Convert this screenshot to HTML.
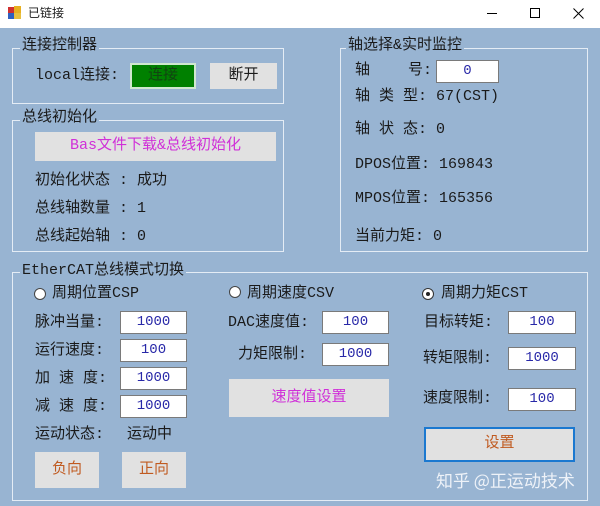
<!DOCTYPE html>
<html><head><meta charset="utf-8"><style>
*{margin:0;padding:0;box-sizing:border-box}
body{width:600px;height:506px;overflow:hidden;background:#98b4d2;position:relative;font-family:"Liberation Mono","Noto Sans CJK SC",monospace;font-size:15px;color:#1a1a1a}
.a{position:absolute;white-space:nowrap;line-height:16px;font-size:15px}
.tb{position:absolute;left:0;top:0;width:600px;height:28px;background:#fff}
.g{position:absolute;border:1px solid #e4ecf5}
.gt{position:absolute;background:#98b4d2;padding:0 2px;line-height:16px;font-size:15px}
.in{position:absolute;background:#fff;border:1px solid #7a7a7a;color:#2828a8;text-align:center;line-height:21px;font-size:14px}
.bt{position:absolute;background:#e1e1e1;text-align:center;font-size:15px}
.r{position:absolute;width:12px;height:12px;border-radius:50%;background:#fff;border:1px solid #444}
</style></head><body>
<div class="tb">
<div style="position:absolute;left:8px;top:7px;width:6px;height:6px;background:#d03030"></div>
<div style="position:absolute;left:14px;top:6px;width:7px;height:7px;background:#e8b020"></div>
<div style="position:absolute;left:8px;top:13px;width:6px;height:6px;background:#3060c0"></div>
<div style="position:absolute;left:14px;top:13px;width:7px;height:6px;background:#e8c040"></div>
<div class="a" style="left:28px;top:5px;font-family:'Noto Sans CJK SC',sans-serif;font-size:12px">已链接</div>
<div style="position:absolute;left:487px;top:13px;width:10px;height:1px;background:#000"></div>
<div style="position:absolute;left:530px;top:8px;width:10px;height:10px;border:1px solid #000"></div>
<svg style="position:absolute;left:573px;top:8px" width="11" height="11"><path d="M0.5 0.5L10.5 10.5M10.5 0.5L0.5 10.5" stroke="#000" stroke-width="1"/></svg>
</div>

<div class="g" style="left:12px;top:48px;width:272px;height:56px"></div>
<div class="gt" style="left:20px;top:38px">连接控制器</div>
<div class="a" style="left:35px;top:68px">local连接:</div>
<div class="bt" style="left:130px;top:63px;width:66px;height:26px;background:#008000;border:2px solid #cfe8cf;line-height:21px;color:#114411">连接</div>
<div class="bt" style="left:210px;top:63px;width:67px;height:26px;line-height:25px">断开</div>

<div class="g" style="left:12px;top:120px;width:272px;height:132px"></div>
<div class="gt" style="left:20px;top:110px">总线初始化</div>
<div class="bt" style="left:35px;top:132px;width:241px;height:29px;line-height:28px;color:#d030d8">Bas文件下载&amp;总线初始化</div>
<div class="a" style="left:35px;top:173px">初始化状态 : 成功</div>
<div class="a" style="left:35px;top:201px">总线轴数量 : 1</div>
<div class="a" style="left:35px;top:229px">总线起始轴 : 0</div>

<div class="g" style="left:340px;top:48px;width:248px;height:204px"></div>
<div class="gt" style="left:346px;top:38px">轴选择&amp;实时监控</div>
<div class="a" style="left:355px;top:63px">轴</div><div class="a" style="left:408px;top:63px">号:</div>
<div class="in" style="left:436px;top:60px;width:63px;height:23px">0</div>
<div class="a" style="left:355px;top:89px">轴 类 型: 67(CST)</div>
<div class="a" style="left:355px;top:122px">轴 状 态: 0</div>
<div class="a" style="left:355px;top:157px">DPOS位置: 169843</div>
<div class="a" style="left:355px;top:191px">MPOS位置: 165356</div>
<div class="a" style="left:355px;top:229px">当前力矩: 0</div>

<div class="g" style="left:12px;top:272px;width:576px;height:229px"></div>
<div class="gt" style="left:20px;top:263px">EtherCAT总线模式切换</div>
<div class="r" style="left:34px;top:288px"></div>
<div class="a" style="left:52px;top:286px">周期位置CSP</div>
<div class="a" style="left:35px;top:315px">脉冲当量:</div><div class="in" style="left:120px;top:311px;width:67px;height:23px">1000</div>
<div class="a" style="left:35px;top:343px">运行速度:</div><div class="in" style="left:120px;top:339px;width:67px;height:23px">100</div>
<div class="a" style="left:35px;top:371px">加 速 度:</div><div class="in" style="left:120px;top:367px;width:67px;height:23px">1000</div>
<div class="a" style="left:35px;top:399px">减 速 度:</div><div class="in" style="left:120px;top:395px;width:67px;height:23px">1000</div>
<div class="a" style="left:35px;top:427px">运动状态:</div><div class="a" style="left:127px;top:427px">运动中</div>
<div class="bt" style="left:35px;top:452px;width:64px;height:36px;line-height:35px;color:#c05a20">负向</div>
<div class="bt" style="left:122px;top:452px;width:64px;height:36px;line-height:35px;color:#c05a20">正向</div>

<div class="r" style="left:229px;top:286px"></div>
<div class="a" style="left:247px;top:286px">周期速度CSV</div>
<div class="a" style="left:228px;top:315px">DAC速度值:</div><div class="in" style="left:322px;top:311px;width:67px;height:23px">100</div>
<div class="a" style="left:238px;top:347px">力矩限制:</div><div class="in" style="left:322px;top:343px;width:67px;height:23px">1000</div>
<div class="bt" style="left:229px;top:379px;width:160px;height:38px;line-height:37px;color:#d030d8">速度值设置</div>

<div class="r" style="left:422px;top:288px;border-color:#333"><div style="position:absolute;left:3px;top:3px;width:4px;height:4px;border-radius:50%;background:#222"></div></div>
<div class="a" style="left:441px;top:286px">周期力矩CST</div>
<div class="a" style="left:424px;top:315px">目标转矩:</div><div class="in" style="left:508px;top:311px;width:68px;height:23px">100</div>
<div class="a" style="left:423px;top:351px">转矩限制:</div><div class="in" style="left:508px;top:347px;width:68px;height:23px">1000</div>
<div class="a" style="left:423px;top:391px">速度限制:</div><div class="in" style="left:508px;top:388px;width:68px;height:23px">100</div>
<div class="bt" style="left:424px;top:427px;width:151px;height:35px;line-height:30px;border:2px solid #1a78d0;color:#c05a20">设置</div>
<div class="a" style="left:436px;top:470px;font-family:'Noto Sans CJK SC',sans-serif;font-size:17px;line-height:20px;color:#eef2f8">知乎 @正运动技术</div>
</body></html>
